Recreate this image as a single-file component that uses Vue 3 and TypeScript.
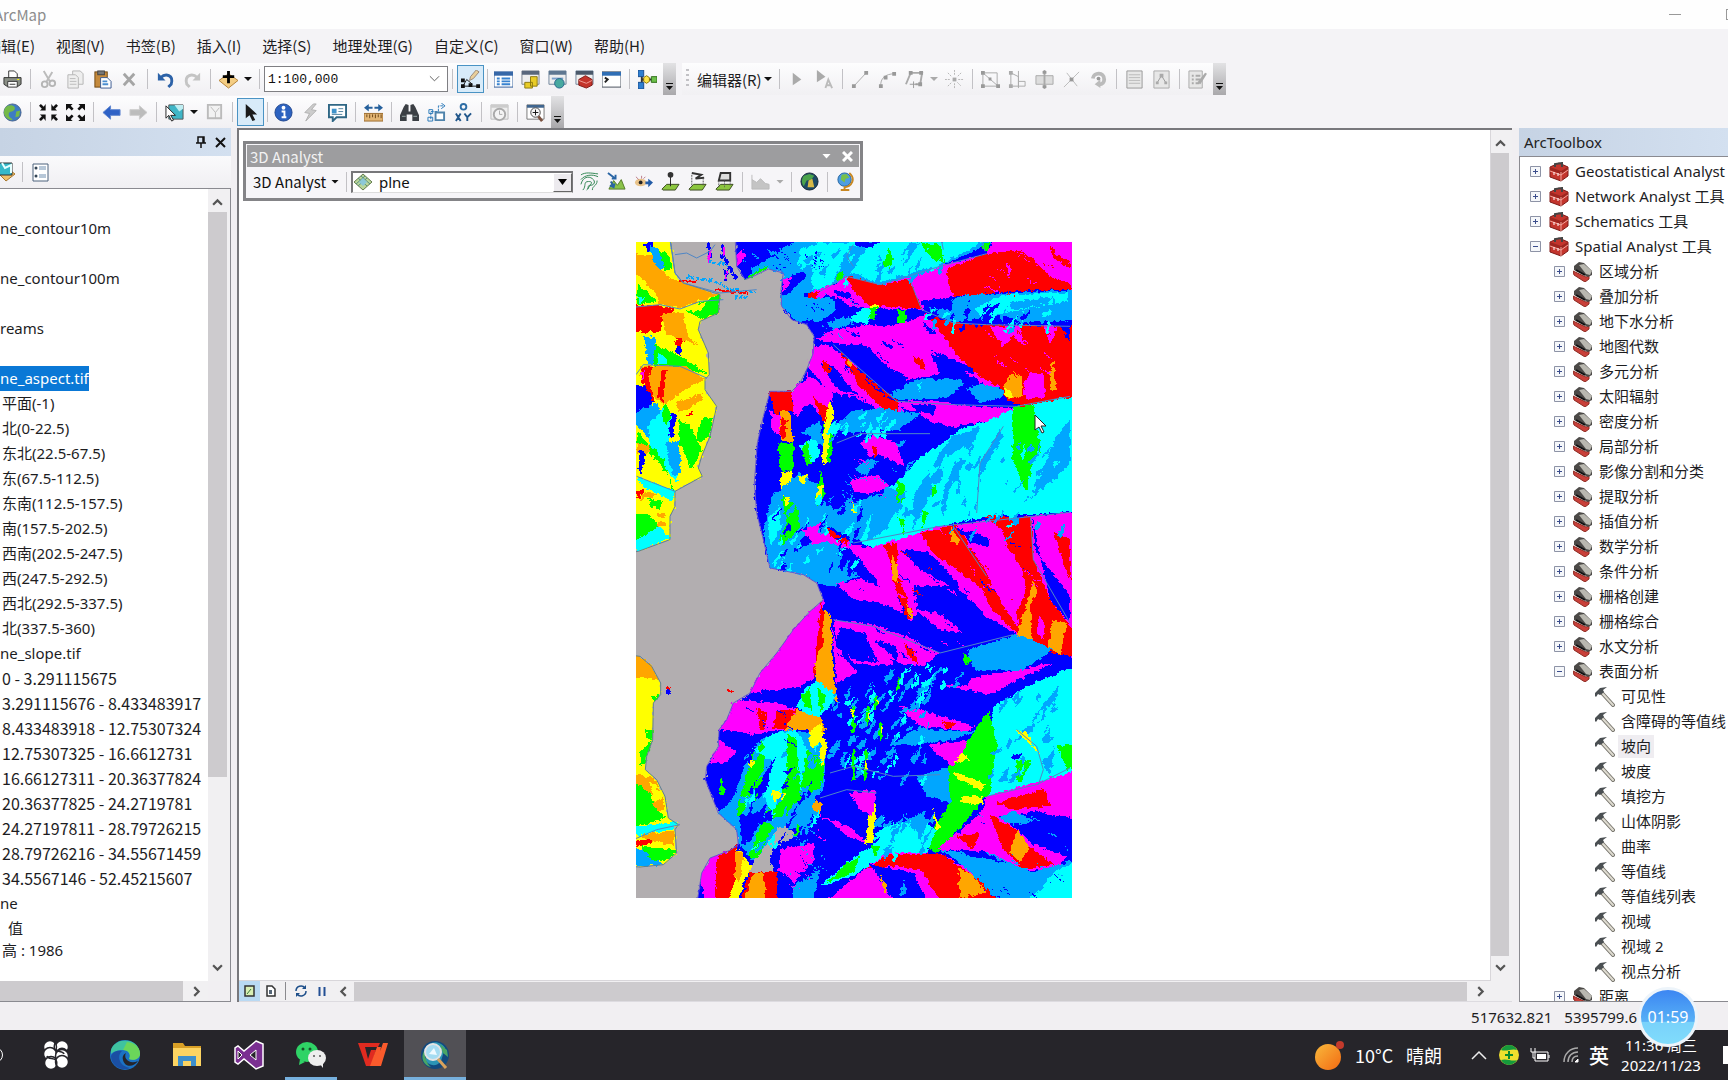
<script setup lang="ts">
type Item = { icon?: string; sep?: boolean; drop?: boolean; on?: boolean; label?: string }

const menus = ['编辑(E)', '视图(V)', '书签(B)', '插入(I)', '选择(S)', '地理处理(G)', '自定义(C)', '窗口(W)', '帮助(H)']

const S: Item = { sep: true }
const D: Item = { drop: true }
const i = (icon: string, label: string, on = false): Item => ({ icon, label, on })

const standardA: Item[] = [i('print', '打印'), S, i('cut', '剪切'), i('copy', '复制'), i('paste', '粘贴'), i('del', '删除'), S, i('undo', '撤消'), i('redo', '恢复'), S, i('add', '添加数据'), D, S]
const standardB: Item[] = [S, i('edit', '编辑器工具条', true), S, i('toc', '内容列表'), i('catalog', '目录'), i('search', '搜索'), i('toolbox', '工具箱'), i('python', 'Python'), S, i('model', '模型构建器')]
const editor: Item[] = [S, i('earrow', '编辑工具'), i('earrowA', '编辑注记'), S, i('eline', '直线'), i('earc', '弧线'), i('etrace', '追踪'), D, i('epoint', '点'), S, i('evert', '编辑折点'), i('eshape', '整形'), i('ecut', '裁剪面'), i('esplit', '分割'), i('erot', '旋转'), S, i('eattr', '属性'), i('esketch', '草图属性'), S, i('ecreate', '创建要素')]
const tools: Item[] = [i('globe', '全图'), S, i('zin', '固定比例放大'), i('zout', '固定比例缩小'), S, i('back', '后退'), i('fwd', '前进'), S, i('select', '选择要素'), D, i('clear', '清除选择'), S, i('pointer', '选择元素', true), S, i('info', '识别'), i('bolt', '超链接'), i('popup', 'HTML 弹出窗口'), S, i('measure', '测量'), S, i('find', '查找'), i('route', '查找路径'), i('xy', '转到 XY'), S, i('time', '时间滑块'), S, i('viewer', '查看器')]
const analyst: Item[] = [i('contour', '等值线'), i('steep', '最陡路径'), i('los', '通视线'), i('ipoint', '插值点'), i('iline', '插值线'), i('ipoly', '插值面'), S, i('profile', '剖面图'), D, S, i('scene', 'ArcScene'), S, i('aglobe', 'ArcGlobe')]

const tin = '<path d="M1 18l5-5h13l-4 6H2z" fill="#8cc63f" stroke="#3a4a20"/>'
const icons: Record<string, string> = {
  print: '<path d="M6 9V1h6l3 3v5z" fill="#fff" stroke="#333"/><path d="M1 8h18v7l-3 2H4l-3-2z" fill="#8a8f86" stroke="#333"/><path d="M5 12h10v6H5z" fill="#fff" stroke="#333"/><path d="M15 10h2" stroke="#ff0"/><path d="M7 15h6" stroke="#333"/>',
  cut: '<path d="M5 1l7 12M14 2L8 12" stroke="#bbb" stroke-width="2" fill="none"/><circle cx="6" cy="15" r="3" fill="none" stroke="#b5b5b5" stroke-width="2"/><circle cx="14" cy="14" r="3" fill="none" stroke="#b5b5b5" stroke-width="2"/>',
  copy: '<path d="M7 1h8l3 3v11H7z" fill="#eee" stroke="#b5b5b5"/><path d="M2 5h8l3 3v11H2z" fill="#eee" stroke="#b5b5b5"/><path d="M4 9h6M4 12h7M4 15h7" stroke="#bbb"/>',
  paste: '<rect x="2" y="2" width="13" height="16" fill="#c58a3d" stroke="#704812"/><rect x="5" y="1" width="7" height="4" fill="#777" stroke="#444"/><path d="M8 8h7l4 4v7H8z" fill="#fff" stroke="#3a5a90"/><path d="M10 12h5M10 15h6" stroke="#4b8ed0" stroke-width="2"/>',
  del: '<path d="M4 4l11 12M15 4L4 16" stroke="#a5a5a5" stroke-width="3"/>',
  undo: '<path d="M2 3v8h8z" fill="#2c62a8"/><path d="M5 8c5-5 14-3 11 7l-3 3" fill="none" stroke="#2c62a8" stroke-width="3"/>',
  redo: '<path d="M18 3v8h-8z" fill="#c4c4c4"/><path d="M15 8C10 3 1 5 4 15l3 3" fill="none" stroke="#c4c4c4" stroke-width="3"/>',
  add: '<path d="M0 11l10-7 10 7-10 8z" fill="#f4cd83" stroke="#b48237"/><path d="M10 1v13M4 7h12" stroke="#000" stroke-width="3"/>',
  edit: '<path d="M2 17l4-7 6 5M2 17h16" stroke="#111" fill="none"/><path d="M0 9h4v4H0zM0 15h4v4H0zM8 14h4v4H8zM16 15h4v4h-4z" fill="#111"/><path d="M9 11l1-4 6-7 3 2-6 7z" fill="#e9cf9a" stroke="#987"/>',
  toc: '<path d="M0 2h20v16H0z" fill="#fff" stroke="#2c5b9b"/><path d="M0 2h20v4H0z" fill="#3768a8"/><path d="M3 9h3M8 9h9M3 12h3M8 12h9M3 15h3M8 15h9" stroke="#3983d0" stroke-width="2"/>',
  catalog: '<path d="M1 1h18v14H1z" fill="#eee" stroke="#7a828c"/><path d="M1 1h18v4H1z" fill="#59677b"/><path d="M10 7h7v10h-7zM4 13h8v6H4z" fill="#e9cc26" stroke="#8a7810"/>',
  search: '<path d="M1 1h18v14H1z" fill="#eee" stroke="#71869c"/><path d="M1 1h18v4H1z" fill="#5e7791"/><path d="M4 9h12" stroke="#7ba0cc" stroke-width="2"/><circle cx="12" cy="14" r="5" fill="#48a9a0" stroke="#27648b"/>',
  toolbox: '<path d="M1 1h18v14H1z" fill="#eee" stroke="#71869c"/><path d="M1 1h18v4H1z" fill="#4a586a"/><path d="M4 10l7-4 7 4v6l-6 3-8-3z" fill="#c4342b" stroke="#7d1b18"/><path d="M4 11l8 3 6-3" stroke="#f0a09a" fill="none"/>',
  python: '<path d="M0 2h20v16H0z" fill="#fff" stroke="#444c58"/><path d="M0 2h20v4H0z" fill="#2f6eb5"/><path d="M3 8l3 2-3 3" fill="none" stroke="#222" stroke-width="2"/>',
  model: '<path d="M4 6v10M4 10h12" stroke="#333" stroke-width="2"/><path d="M0 0h6v7H0zM0 13h6v7H0z" fill="#2f7fd0" stroke="#1a4c8c"/><path d="M6 8l3-2 3 2v4l-3 2-3-2z" fill="#ffe54a" stroke="#8a7200"/><path d="M14 7h6v6h-6z" fill="#6cc04a" stroke="#2e6b18"/>',
  globe: '<circle cx="10" cy="10" r="9" fill="#3d7cc4" stroke="#47628a"/><path d="M5 3c5-2 9 1 7 4s-6 1-6 5 4 3 4 6c-5 0-9-4-9-8s2-6 4-7zM14 9l4-1-1 6-4 1z" fill="#74b949"/>',
  zin: '<g fill="#111"><path d="M7 1v7H1l2-2-3-3 2-2 3 3zM13 1v7h6l-2-2 3-3-2-2-3 3zM7 19v-7H1l2 2-3 3 2 2 3-3zM13 19v-7h6l-2 2 3 3-2 2-3-3z"/></g>',
  zout: '<g fill="#111"><path d="M0 1h7L5 3l3 3-2 2-3-3-3 3zM20 1h-7l2 2-3 3 2 2 3-3 3 3zM0 19h7l-2-2 3-3-2-2-3 3-3-3zM20 19h-7l2-2-3-3 2-2 3 3 3-3z"/></g>',
  back: '<path d="M1 10l8-7v4h10v6H9v4z" fill="#2f62c6" stroke="#5f86d0"/>',
  fwd: '<path d="M19 10l-8-7v4H1v6h10v4z" fill="#bcbcbc" stroke="#ccc"/>',
  select: '<path d="M4 2h15v15H4z" fill="#3fb5c6" stroke="#555"/><path d="M10 2l5 7 4-3V2z" fill="#bfeef2"/><path d="M1 3v13l3-3 3 6 2-1-3-5h5z" fill="#fff" stroke="#222"/>',
  clear: '<path d="M3 2h14v14H3z" fill="#f2f2f2" stroke="#bbb" stroke-width="2"/><path d="M6 4l5 6 4-5M11 10v6" stroke="#bbb" fill="none"/>',
  pointer: '<path d="M5 1v15l4-3 3 6 3-1-3-6h5z" fill="#1a1a1a"/>',
  info: '<circle cx="10" cy="10" r="9" fill="#2c62c0" stroke="#1d458d"/><path d="M8 9h3v6M8 15h5" stroke="#fff" stroke-width="2" fill="none"/><circle cx="10" cy="5" r="2" fill="#fff"/>',
  bolt: '<path d="M13 1L4 10l5 1-4 8 11-11-5-1 5-6z" fill="#ccc" stroke="#b0b0b0"/>',
  popup: '<path d="M1 2h18v13H9l-4 4v-4H1z" fill="#fff" stroke="#2f6785" stroke-width="2"/><path d="M4 6h5v5H4z" fill="#3e93cb"/><path d="M11 6h5M11 9h5M4 12h11" stroke="#4d7f9d"/>',
  measure: '<path d="M0 5l5-4v3h4v2H5v3zM20 5l-5-4v3h-4v2h4v3z" fill="#25609c"/><path d="M0 11h20v8H0z" fill="#e3b674" stroke="#9a6a2c"/><path d="M3 12v3M6 12v4M9 12v3M12 12v4M15 12v3M18 12v4" stroke="#6b4516"/>',
  find: '<path d="M4 4l2-3 3 1v7h2V2l3-1 2 3 4 9v6h-7v-7H7v7H0v-6z" fill="#3b3f44"/><path d="M2 14h4M14 14h4" stroke="#9aa"/>',
  route: '<path d="M4 17V9h8V3h5" fill="none" stroke="#2878b8" stroke-dasharray="3 1"/><path d="M15 0l4 3-4 3M1 15h5v4H1zM2 7h4v4H2z" fill="none" stroke="#2878b8"/><path d="M9 10h9v8H9z" fill="#fff" stroke="#4f83ab" stroke-width="2"/>',
  xy: '<circle cx="10" cy="4" r="3" fill="none" stroke="#2f6ea5" stroke-width="2"/><path d="M2 11l5 8M7 11l-5 8M11 11l3 4 4-4M14 15v4" fill="none" stroke="#23588c" stroke-width="2"/>',
  time: '<path d="M1 2h18v15H1z" fill="#eee" stroke="#bbb"/><path d="M1 2h18v3H1z" fill="#ccc"/><circle cx="10" cy="12" r="6" fill="#f4f4f4" stroke="#aaa" stroke-width="2"/><path d="M10 8v4h3" stroke="#aaa" fill="none"/>',
  viewer: '<path d="M1 2h18v15H1z" fill="#fff" stroke="#777"/><path d="M1 2h18v3H1z" fill="#40668f"/><circle cx="10" cy="10" r="5" fill="#f6f6f6" stroke="#444"/><path d="M10 7v6M7 10h6" stroke="#111"/><path d="M13 14l4 5" stroke="#7a5140" stroke-width="3"/>',
  earrow: '<path d="M5 3v13l9-6z" fill="#aaa"/>',
  earrowA: '<path d="M2 0v13l9-6z" fill="#aaa"/><path d="M11 19l3-9 4 9M12 16h5" fill="none" stroke="#bbb" stroke-width="2"/>',
  eline: '<path d="M3 17L16 3" stroke="#aaa"/><path d="M1 15h4v4H1zM14 1h4v4h-4z" fill="#999"/>',
  earc: '<path d="M3 17C2 9 8 4 17 4" stroke="#aaa" fill="none"/><path d="M1 15h4v4H1zM15 2h4v4h-4zM6 6h4v4H6z" fill="#999"/>',
  etrace: '<path d="M1 15L6 3h12l-2 12h-5" stroke="#aaa" fill="none" stroke-width="2"/><path d="M4 1h4v4H4zM15 1h4v4h-4zM14 13h4v4h-4z" fill="#999"/><path d="M9 12v7M5 15h8" stroke="#999"/>',
  epoint: '<path d="M10 0v6M10 14v6M0 10h6M14 10h6M3 3l4 4M13 13l4 4M17 3l-4 4M3 17l4-4" stroke="#b5b5b5" stroke-dasharray="2 1"/><path d="M8 8h4v4H8z" fill="#aaa"/>',
  evert: '<path d="M2 3v14h16L2 3h15v13" stroke="#aaa" fill="none"/><path d="M0 1h4v4H0zM0 15h4v4H0zM16 15h4v4h-4zM8 8h3v3H8z" fill="#999"/>',
  eshape: '<path d="M3 3v14h8V7L3 3M11 1v18M11 12h7v5h-7" stroke="#aaa" fill="none"/><path d="M1 1h4v4H1zM1 15h4v4H1z" fill="#aaa"/>',
  ecut: '<path d="M1 6h18v9H1z" fill="#ddd" stroke="#aaa"/><path d="M10 0v20" stroke="#aaa" stroke-width="2"/><path d="M8 1h4v3H8zM8 16h4v3H8z" fill="#999"/>',
  esplit: '<path d="M2 18L18 2M5 3l11 14" stroke="#bbb"/><path d="M8 8h4v4H8z" fill="#999"/>',
  erot: '<path d="M4 9c1-7 12-7 12 1 0 3-2 5-5 5" fill="none" stroke="#bbb" stroke-width="4"/><path d="M12 10v9l-6-4z" fill="#bbb"/><circle cx="10" cy="9" r="2" fill="#999"/>',
  eattr: '<path d="M2 1h16v18H2z" fill="#e7e7e7" stroke="#999"/><path d="M4 5h12M4 8h12M4 11h12M4 14h12" stroke="#bbb"/>',
  esketch: '<path d="M2 1h16v18H2z" fill="#e7e7e7" stroke="#aaa"/><path d="M5 14l5-8 5 8" stroke="#999" fill="none"/><path d="M8 4h4v4H8zM4 12h3v3H4zM13 12h3v3h-3z" fill="#aaa"/>',
  ecreate: '<path d="M1 1h14v18H1z" fill="#e7e7e7" stroke="#aaa"/><path d="M4 6h2M8 6h5M4 10h2M8 10h5M4 14h2M8 14h4" stroke="#aaa" stroke-width="2"/><path d="M10 13l8-10 2 1-7 11z" fill="#aaa"/>',
  contour: '<path d="M1 3c5-3 10-2 18-1M1 8c4-5 12-6 18-3M1 13c2-8 8-9 12-6s2 7-2 7-1 3-4 5M3 19c4-4 0-9 6-9s2 3-1 8M13 19c0-5 5-4 5-10" fill="none" stroke="#2d8450"/>',
  steep: '<path d="M2 18l5-9 4 5 4-6 4 10z" fill="#8bc34a" stroke="#557a2a"/><path d="M1 1l8 6M9 3v4H5M4 10l3 5M3 14l4 2 1-4" stroke="#2a65a5" stroke-width="2" fill="none"/>',
  los: '<ellipse cx="7" cy="11" rx="6" ry="4" fill="#e9c38a"/><circle cx="7" cy="11" r="2" fill="#222"/><path d="M12 10h3V7l5 4-5 5v-3h-3z" fill="#225ba6"/><path d="M2 5l3 3M8 4v3M12 5l-2 2" stroke="#b78"/>',
  ipoint: tin + '<path d="M10 5v10" stroke="#222"/><circle cx="10" cy="3" r="3" fill="#333"/>',
  iline: tin + '<path d="M4 1l10 2-6 4 9-1" fill="none" stroke="#333" stroke-width="2"/><path d="M4 3v12M16 6v9" stroke="#555" stroke-dasharray="2 1"/>',
  ipoly: tin + '<path d="M6 1h10v8H4z" fill="#ddd" stroke="#333" stroke-width="2"/><path d="M4 9v7M10 9v7M16 9v6" stroke="#555" stroke-dasharray="2 1"/>',
  profile: '<path d="M1 3v15h18v-5l-4-1-5-5-4 4-5-3" fill="#c4c4c4" stroke="#bbb"/>',
  scene: '<circle cx="10" cy="10" r="9" fill="#1c4964" stroke="#123"/><path d="M4 4l6-2 5 2-3 4-5 1-3 6c-3-4-2-8 0-11z" fill="#4aa34b"/><path d="M9 9l4-2 2 9H8z" fill="#d7b946"/>',
  aglobe: '<circle cx="9" cy="8" r="7" fill="#4e9de2" stroke="#2263a0"/><path d="M6 3l5-1 3 4-4 1-1 4-4-3z" fill="#77c04a"/><path d="M14 1c7 6 3 15-6 15M9 16v3M5 19h9" stroke="#c88722" stroke-width="2" fill="none"/>',
}

const legend = ['平面(-1)', '北(0-22.5)', '东北(22.5-67.5)', '东(67.5-112.5)', '东南(112.5-157.5)', '南(157.5-202.5)', '西南(202.5-247.5)', '西(247.5-292.5)', '西北(292.5-337.5)', '北(337.5-360)']
const slopes = ['0 - 3.291115675', '3.291115676 - 8.433483917', '8.433483918 - 12.75307324', '12.75307325 - 16.6612731', '16.66127311 - 20.36377824', '20.36377825 - 24.2719781', '24.27197811 - 28.79726215', '28.79726216 - 34.55671459', '34.5567146 - 52.45215607']

type Node = { t: string; l: number; open?: boolean; hot?: boolean }
const tree: Node[] = [
  { t: 'Geostatistical Analyst', l: 0 }, { t: 'Network Analyst 工具', l: 0 }, { t: 'Schematics 工具', l: 0 }, { t: 'Spatial Analyst 工具', l: 0, open: true },
  ...['区域分析', '叠加分析', '地下水分析', '地图代数', '多元分析', '太阳辐射', '密度分析', '局部分析', '影像分割和分类', '提取分析', '插值分析', '数学分析', '条件分析', '栅格创建', '栅格综合', '水文分析'].map((t) => ({ t, l: 1 })),
  { t: '表面分析', l: 1, open: true },
  ...['可见性', '含障碍的等值线', '坡向', '坡度', '填挖方', '山体阴影', '曲率', '等值线', '等值线列表', '视域', '视域 2', '视点分析'].map((t) => ({ t, l: 2, hot: t === '坡向' })),
  { t: '距离', l: 1 },
]

/* Aspect classes */
const C: Record<string, string> = { g: '#b2aeb0', y: '#ffff00', o: '#ffa600', r: '#ff0000', m: '#ff00ff', b: '#0000ff', s: '#00a6ff', c: '#00ffff', n: '#00ff00' }

const eastCoast = 'M345 20L350 110 375 150 400 140 445 118 490 130 483 180 485 230 515 270 560 285 582 320 580 370 560 420 540 460 515 485 450 485 430 560 412 640 403 760 410 850 430 930 450 1015 550 1035 590 1060 610 1110 570 1145 520 1200 470 1270 420 1330 390 1390 340 1420 320 1470 297 1500 295 1550 260 1610 256 1650 275 1700 295 1750 350 1800 355 1845 330 1862 270 1885 245 1930 228 2040 1400 2040 1400 0z'
const westCoast = 'M20 20L150 20 165 130 190 160 300 195 295 250 240 275 235 300 265 370 268 435 255 450 255 480 290 530 270 620 245 680 235 715 247 740 165 785 165 830 150 860 150 930 55 965 20 970z'
const southCoast = 'M20 1275L60 1280 95 1310 122 1360 122 1395 100 1420 98 1530 80 1580 76 1620 110 1650 135 1700 145 1765 175 1785 165 1800 170 1870 130 1905 60 1912 20 1910z'

const west: [string, string][] = [
  ['o', '20,65 100,80 150,150 290,170 300,195 230,215 180,235 120,225 110,195 60,140 20,130'],
  ['b', '70,40 100,40 105,60 85,65'], ['s', '90,50 115,55 145,105 125,125 100,95'], ['n', '120,60 145,80 155,115 135,125'],
  ['n', '55,165 80,185 110,215 50,225'], ['c', '50,200 75,205 60,222'],
  ['n', '190,240 300,195 300,245 240,270 215,250'], ['y', '200,225 260,220 240,245 190,240'],
  ['r', '20,230 110,225 165,240 125,275 120,310 55,305 20,300'], ['o', '125,250 190,250 205,320 230,345 190,330 140,315'],
  ['s', '70,320 105,325 110,400 85,405'], ['n', '105,345 180,380 262,430 180,415 100,408'], ['r', '170,325 188,330 183,360 168,350'], ['b', '168,350 184,350 182,375 165,370'],
  ['c', '115,370 140,385 140,405 110,403'],
  ['o', '60,410 200,410 255,450 200,475 130,525 90,490 60,440'], ['r', '60,415 100,410 85,440 105,520 70,480'], ['r', '125,420 140,420 128,520 112,500'],
  ['m', '60,430 75,425 70,450'], ['b', '20,455 75,470 100,515 75,560 20,560'], ['s', '20,560 110,520 130,560 100,640 50,590'],
  ['c', '85,590 130,530 155,560 150,640 175,760 120,700 90,650'], ['b', '155,550 170,555 160,625 145,615'], ['s', '135,640 180,630 182,730 160,740'],
  ['n', '175,570 210,590 245,660 215,720 180,640'], ['o', '165,520 250,490 240,520 180,545'], ['r', '195,560 225,540 220,555'], ['n', '135,520 155,545 140,590 125,560'],
  ['n', '245,570 280,560 270,620 225,640'],
  ['n', '55,610 130,690 165,790 140,790 80,720 50,640'], ['y', '50,650 80,660 150,740 155,800 90,750 60,720'], ['o', '50,640 90,650 85,670 50,670'],
  ['b', '60,660 75,665 68,735 55,720'], ['c', '50,740 165,785 155,815 60,765'], ['r', '50,780 75,780 60,805 50,800'], ['o', '75,785 115,795 60,810'],
  ['n', '85,805 125,815 120,840 90,830'], ['n', '20,850 90,855 130,910 115,935 20,960'], ['c', '20,945 95,905 120,890 150,925 55,965'], ['o', '110,852 135,852 135,862 110,862'], ['o', '112,880 135,880 135,890 112,890'],
]
const south: [string, string][] = [
  ['o', '20,1270 60,1280 95,1310 115,1350 20,1340'], ['n', '95,1400 122,1395 105,1420'], ['n', '75,1500 100,1500 98,1530 80,1525'], ['n', '60,1570 95,1530 80,1600 60,1610'],
  ['o', '20,1630 100,1645 120,1680 85,1700 20,1640'], ['n', '20,1650 80,1680 110,1730 135,1765 20,1800'], ['o', '95,1720 130,1700 135,1740 110,1745'], ['y', '90,1660 110,1665 120,1700 95,1690'],
  ['c', '20,1795 175,1775 165,1800 60,1815 20,1820'], ['o', '60,1815 160,1805 165,1850 80,1830'], ['r', '20,1835 100,1830 80,1850 20,1845'], ['n', '60,1850 165,1860 150,1890 80,1895'], ['s', '20,1850 70,1860 130,1905 20,1912'], ['n', '80,1865 140,1870 120,1895 90,1890'],
]
const east: [string, string][] = [
  ['s', '340,20 1150,20 1050,70 960,110 900,135 780,165 680,140 620,175 560,190 545,200 640,205 650,240 600,275 530,275 480,225 485,160 440,118 380,155 400,110 460,80'],
  ['b', '340,20 560,20 480,60 400,80 350,105'], ['m', '340,80 370,60 375,80 350,115'],
  ['n', '370,150 445,105 440,120 395,175'],
  ['c', '540,60 600,40 1100,30 960,105 870,130 780,158 690,130 620,170 580,180 570,110 530,110'],
  ['s', '690,50 740,50 700,120 675,140 640,160 665,100'], ['b', '705,38 775,38 760,52 720,52'], ['s', '870,40 900,40 850,110 840,80'],
  ['n', '900,40 960,45 978,100 940,95'], ['n', '805,50 818,90 808,125 790,120'], ['n', '1090,38 1110,38 1105,65 1085,60'], ['n', '655,130 670,120 665,155 650,155'],
  ['b', '480,160 540,125 560,140 500,200 485,200'], ['m', '490,150 520,140 500,175 485,190'],
  ['m', '1120,30 1400,20 1400,180 1180,182 1010,200 905,212 910,240 740,235 690,230 640,198 565,205 570,188 650,160 680,140 780,165 900,135 960,110 1100,72'],
  ['r', '985,115 1090,75 1200,60 1240,90 1290,140 1350,160 1350,180 1180,184 1000,200 985,160'], ['r', '680,138 780,165 870,150 905,238 740,225 710,195'], ['r', '560,190 600,185 590,205 560,205'],
  ['r', '1290,40 1310,75 1350,100 1350,115 1300,85'], ['m', '1160,95 1175,120 1165,140'], ['b', '640,180 690,190 685,205 650,198'],
  ['s', '925,225 1050,195 1400,180 1400,270 1200,278 1130,258 1000,278 930,245'], ['b', '910,215 1000,205 990,240 930,235'], ['c', '1065,235 1150,195 1345,188 1345,215 1250,232 1080,265'], ['s', '1160,220 1300,200 1280,225 1180,240'],
  ['b', '1100,265 1150,258 1200,275 1120,285'],
  ['c', '695,260 740,232 760,235 740,285 690,275'], ['n', '752,228 775,222 765,270 745,268'], ['y', '755,225 775,222 770,235 752,236'], ['n', '835,240 860,240 855,285 830,280'], ['s', '615,280 690,260 690,285 640,300'],
  ['m', '585,330 640,300 740,285 800,290 870,275 920,250 960,290 1060,420 1150,475 1090,465 1000,400 930,370 960,430 900,445 850,455 800,410 740,345 680,345'],
  ['b', '780,335 820,350 815,360 790,348'], ['b', '905,275 950,310 930,315'], ['r', '875,380 910,390 915,425 890,405'], ['b', '930,360 1000,390 1070,420 1060,435 980,400'],
  ['r', '915,250 1000,280 1090,285 1400,290 1400,500 1210,530 1160,510 1140,470 1080,440 1010,375 965,310'],
  ['m', '1110,290 1200,285 1215,350 1180,320 1150,350'], ['m', '1270,290 1310,290 1290,345'], ['b', '1310,275 1350,280 1350,340 1335,310'], ['m', '1230,430 1270,430 1275,500 1215,512 1210,460'],
  ['o', '1180,425 1205,445 1208,500 1165,508 1148,475'], ['o', '1300,388 1310,480 1290,485 1288,430'], ['y', '1150,475 1175,485 1180,505 1160,505'],
  ['s', '805,495 860,460 900,450 1000,445 1035,462 980,505 840,512'], ['s', '1040,478 1080,463 1145,475 1155,500 1080,518'], ['c', '890,460 905,460 900,490'],
  ['m', '575,350 620,345 700,400 760,480 830,515 950,515 1050,530 1190,535 1120,570 1000,592 940,580 890,545 780,540 700,500 640,490 560,440'],
  ['b', '600,400 640,410 700,480 720,500 650,480'], ['b', '650,360 760,370 800,410 860,440 850,480 790,490 740,440 700,400'], ['b', '560,410 600,450 620,480 570,460'], ['r', '605,385 635,420 625,440 605,410'],
  ['r', '655,360 720,425 780,475 835,515 835,545 780,535 720,475 690,420'], ['o', '680,390 700,400 690,412'], ['b', '870,525 950,525 940,555 900,550'],
  ['r', '445,480 515,485 520,545 475,545 470,570'], ['m', '515,480 570,440 640,490 632,560 605,560 570,520 530,560 520,540'], ['r', '575,500 632,540 615,582'], ['m', '450,540 480,560 480,620 455,600'],
  ['b', '630,510 700,520 690,560 640,640'], ['s', '650,600 690,545 780,535 900,552 840,600 740,600 700,612'], ['m', '720,640 760,615 830,640 850,710 790,680 750,680'], ['r', '755,650 775,660 768,690'],
  ['m', '640,755 770,735 810,770 750,795 690,780'], ['s', '700,720 740,690 775,695 740,735'], ['c', '540,650 590,620 600,680 570,700'], ['s', '540,610 600,575 610,650 570,620'], ['n', '545,660 560,640 575,700 560,710'],
  ['o', '480,545 508,545 520,640 482,630'], ['r', '485,560 500,575 495,630 480,620'], ['n', '472,640 522,640 522,725 485,725'], ['y', '482,728 516,725 516,805 485,790'],
  ['s', '430,900 455,800 540,730 600,770 640,840 780,790 740,945 680,915 600,880 540,930 520,960 555,1040 450,1015'],
  ['n', '485,800 530,830 540,890 490,950 470,950 500,880'], ['c', '445,860 480,820 480,900 450,950'], ['y', '490,800 510,810 500,830'],
  ['n', '635,560 638,640 610,825 585,825 608,690 610,580'], ['y', '630,510 642,550 632,600 620,700 606,700 612,580'], ['y', '535,740 560,740 555,765 540,760'], ['y', '595,770 608,770 600,820 588,820'],
  ['b', '600,700 700,700 690,800 620,830'],
  ['c', '1400,495 1400,845 1100,860 960,890 880,925 760,952 720,940 750,860 790,790 850,740 890,690 970,640 1020,600 1130,562 1190,532'],
  ['s', '1000,620 1080,590 1060,640 980,680 960,760 930,760 950,680'], ['s', '880,800 930,720 940,780 880,900'], ['s', '1350,570 1350,700 1290,760 1250,790 1200,840 1260,740 1310,620'], ['s', '1140,600 1150,620 1080,740 1070,840 1080,700'], ['s', '760,830 800,770 850,790 800,900 740,940 750,880'], ['s', '1010,680 1035,690 985,790 970,860 970,790'],
  ['n', '1178,532 1240,525 1260,640 1240,700 1215,785 1180,690'], ['n', '1240,600 1262,640 1262,670'], ['n', '830,745 855,775 850,820 830,820'], ['n', '905,840 925,850 905,900'], ['n', '940,760 950,790 935,800'], ['n', '835,860 855,880 850,920'], ['y', '690,790 710,850 698,850'],
  ['s', '490,990 600,920 670,950 660,1000 720,1040 640,1070 600,1065 550,1035'],
  ['m', '545,900 600,880 620,900 700,945 760,952 960,890 1240,858 1400,845 1400,1300 1290,1260 1190,1218 1100,1212 1030,1150 930,1100 870,1180 850,1090 790,1080 730,1000 690,960 620,935 580,945'],
  ['r', '1090,860 1232,862 1240,990 1290,1110 1345,1180 1400,1290 1290,1270 1190,1215 1110,1130 1060,1020 960,895 1010,885 1120,960 1170,1000 1150,900'],
  ['m', '1010,890 1110,905 1180,975 1260,1120 1190,1190 1140,1110 1100,1030'], ['r', '1200,1000 1230,980 1290,1120 1300,1230 1200,1215 1190,1150 1220,1080'], ['r', '900,910 960,900 1040,990 1090,1080 1010,1020 940,970'],
  ['b', '1000,890 1110,925 1110,950 1050,940'], ['b', '840,960 920,965 960,1000 1020,1070 1010,1080 900,1020'], ['b', '1235,860 1245,960 1350,1100 1350,1180 1290,1110'], ['m', '1250,860 1350,850 1350,1080 1290,960'], ['r', '1300,900 1350,930 1350,1060'],
  ['r', '790,945 832,940 830,1020 880,1160 860,1165 820,1060 810,990'], ['r', '600,880 680,930 680,945 640,925'], ['o', '815,975 832,1010 835,1060 815,1050'], ['o', '860,1110 880,1160 868,1165'], ['o', '990,890 1020,930 1010,950 995,930'],
  ['o', '1240,1050 1252,1090 1230,1130 1240,1240 1190,1215 1215,1140'], ['o', '1300,1170 1340,1180 1320,1275 1283,1250'], ['m', '1255,1160 1275,1180 1270,1235 1250,1210'],
  ['b', '880,1070 1010,1070 1100,1160 1190,1215 1050,1240 960,1180 890,1140'], ['m', '890,1140 960,1150 1030,1210 960,1200'],
  ['m', '650,1060 730,1050 830,1090 850,1150 780,1120 700,1110'], ['m', '640,1170 760,1185 860,1220 960,1270 910,1310 830,1300 770,1310 700,1300 650,1230'], ['b', '660,1190 730,1210 780,1300 700,1290 650,1240'], ['b', '760,1230 830,1250 830,1290'], ['r', '850,1240 880,1260 895,1305 870,1285'],
  ['s', '1040,1262 1190,1213 1300,1258 1210,1322 1065,1322'], ['n', '1030,1270 1055,1290 1035,1305'], ['m', '960,1370 1060,1345 1300,1300 1200,1350 1110,1395 1040,1380'], ['b', '990,1335 1060,1335 1040,1370 1000,1370'],
  ['c', '1400,1295 1400,1620 1250,1665 1105,1700 1120,1430 1220,1370'], ['s', '1250,1450 1320,1360 1300,1440 1220,1520 1180,1540'], ['s', '1265,1600 1300,1560 1310,1520 1290,1640'], ['n', '1190,1595 1240,1590 1200,1660 1185,1640'], ['n', '1310,1550 1400,1540 1400,1610 1340,1620'], ['y', '1185,1500 1220,1508 1262,1575 1220,1535'], ['b', '1170,1580 1210,1570 1190,1590'],
  ['s', '890,1640 1000,1610 990,1720 920,1700'], ['n', '1105,1443 1132,1540 1110,1690 1050,1760 950,1870 905,1850 990,1720 985,1610 1060,1510'], ['y', '1015,1560 1052,1590 1000,1600'], ['y', '1000,1625 1095,1665 1085,1682 1010,1645'], ['y', '1030,1700 1090,1700 1090,1725 1020,1718'],
  ['m', '840,1430 900,1440 1065,1490 1040,1505 900,1490'], ['r', '960,1475 1010,1480 990,1500'], ['s', '820,1545 880,1500 1065,1505 1000,1530 880,1545'], ['m', '925,1545 1045,1530 1000,1610 960,1580'],
  ['m', '1100,1700 1400,1615 1400,1780 1250,1745 1180,1755 1130,1760 1000,1840 950,1860 1080,1752'], ['r', '1130,1720 1270,1678 1290,1728 1180,1740'], ['s', '1120,1770 1180,1745 1240,1770 1200,1785'], ['b', '1240,1770 1350,1760 1350,1840 1280,1850 1200,1800'],
  ['m', '960,1860 1100,1740 1180,1790 1240,1845 1340,1880 1300,1925 1220,1920 1100,1870'], ['r', '1110,1755 1190,1800 1230,1850 1300,1905 1210,1920 1150,1860'], ['o', '1190,1800 1230,1850 1200,1900 1170,1870'], ['r', '1010,1820 1080,1810 1060,1860'],
  ['s', '960,1862 1100,1867 1240,1928 1400,1880 1400,2040 1130,2040 1050,1930 1000,1885'], ['c', '1310,1920 1400,1885 1400,2040 1180,2040 1260,1980'], ['b', '1000,1860 1090,1865 1160,1900 1060,1880'],
  ['c', '600,1970 690,1890 770,1840 790,1790 890,1770 950,1800 920,1870 800,1872 700,1940'], ['n', '680,1900 720,1880 700,1930 620,1960'], ['n', '750,1845 780,1850 765,1880'], ['s', '850,1760 930,1770 900,1830'], ['y', '765,1718 762,1840 735,1842 748,1750'], ['y', '935,1730 960,1790 950,1800'],
  ['m', '620,2010 720,1930 800,1870 960,1872 1050,1922 1150,2040 620,2040'], ['r', '740,1918 800,1875 960,1872 1060,1935 1130,2010 960,2010 900,1920 830,1910'], ['o', '1015,1915 1060,1935 1100,1990 1020,2005'], ['b', '750,1905 880,1930 920,2010 820,2010'], ['s', '850,1950 860,1990 840,2000'], ['o', '780,1935 800,1970 795,2000'],
  ['m', '612,1105 570,1145 520,1200 470,1270 420,1330 385,1390 540,1372 580,1342 605,1250'], ['m', '635,1180 650,1250 710,1330 650,1360'], ['r', '605,1110 620,1200 605,1300 580,1345 590,1250'], ['o', '612,1140 632,1160 640,1330 655,1425 590,1352 585,1300 608,1240'],
  ['m', '340,1410 470,1420 530,1440 500,1500 400,1515 295,1500 325,1450'], ['r', '410,1435 440,1450 435,1500 420,1500'], ['r', '470,1440 530,1440 500,1500 460,1495'], ['o', '530,1440 600,1460 615,1500 600,1540 575,1540 565,1500 495,1500'],
  ['c', '530,1430 550,1380 590,1352 650,1400 600,1465 545,1445'], ['n', '545,1400 570,1375 575,1440 550,1430'], ['n', '590,1370 620,1400 600,1450'], ['m', '270,1600 300,1530 350,1570 310,1600'],
  ['s', '290,1750 330,1720 350,1680 380,1590 420,1530 500,1500 570,1510 620,1540 610,1680 510,1770 430,1870 400,1895 355,1840 350,1800'],
  ['n', '390,1600 440,1560 430,1620 380,1720 360,1780 350,1740'], ['c', '400,1560 450,1515 530,1500 560,1560 540,1690 460,1760 430,1700 460,1600'], ['b', '440,1620 465,1580 440,1680 400,1720 380,1780 400,1690'], ['n', '500,1510 530,1530 540,1690 500,1760 450,1770 500,1650'], ['n', '560,1560 615,1600 600,1680 545,1670'], ['y', '565,1540 570,1510 605,1480 620,1560 610,1610 590,1560'], ['y', '380,1590 405,1600 390,1615'], ['y', '455,1680 495,1690 490,1710 460,1710'],
  ['b', '355,1760 440,1740 400,1820 370,1850'], ['n', '430,1770 460,1790 410,1890 385,1880'], ['n', '300,1640 315,1690 300,1700'], ['s', '520,1770 560,1710 600,1750 560,1790 500,1800'], ['o', '570,1700 608,1725 600,1755 580,1740'],
  ['g', '385,1930 410,1885 440,1845 470,1800 500,1790 530,1820 460,1850 450,1900 470,1930'],
  ['m', '690,1690 770,1680 755,1760 720,1740'], ['m', '590,1750 700,1800 740,1840 680,1820 650,1790'], ['m', '480,1860 580,1840 585,1890 520,1960 475,1920'], ['s', '520,1970 600,1920 580,2010 520,2010'],
  ['m', '240,2030 245,1930 270,1885 330,1862 320,1920 290,2030'], ['r', '290,1885 350,1850 350,1960 320,2030 285,2030'], ['y', '350,1850 395,1910 370,1960 350,2030 320,2030 345,1950'], ['o', '350,1850 370,1880 355,1960 345,1940'], ['r', '390,1930 470,1925 470,2020 360,2020'], ['o', '400,1930 430,1930 440,2020 370,2020'], ['b', '228,2030 240,1950 260,2030'],
]

/* Small facets scattered over parts of the slope: x, y, w, h, colours, count */
const zones: [number, number, number, number, string, number][] = [
  [640, 1350, 300, 230, 'sssc', 60], [640, 1050, 400, 260, 'bbm', 60], [380, 1520, 230, 320, 'ncsb', 60], [480, 780, 250, 240, 'scb', 60], [360, 45, 240, 60, 'sb', 40],
  [800, 620, 540, 280, 'ssc', 60], [560, 45, 420, 90, 'sc', 40], [930, 200, 400, 70, 'bsc', 40], [590, 300, 260, 240, 'bm', 36], [1000, 60, 330, 120, 'mr', 24],
  [1080, 290, 260, 130, 'mr', 24], [780, 1740, 170, 120, 'sc', 30], [780, 940, 500, 150, 'mbr', 36], [480, 1780, 110, 200, 'mbs', 30], [1120, 1350, 220, 280, 'sc', 40],
  [1060, 1740, 280, 240, 'sb', 30], [660, 680, 160, 130, 'sm', 24], [640, 540, 200, 60, 'sc', 24], [300, 1400, 200, 130, 'mb', 20], [540, 180, 140, 130, 'sb', 30], [800, 1300, 240, 80, 'sc', 24],
  [640, 1560, 300, 80, 'sc', 14],
]
let seed = 7
const rnd = () => ((seed = (seed * 16807) % 2147483647) / 2147483647)
const facets = zones.flatMap(([x, y, w, h, cs, n]) =>
  Array.from({ length: n }, () => {
    const px = Math.round(x + rnd() * w), py = Math.round(y + rnd() * h)
    const vertical = cs.includes('c')
    const dx = Math.round(vertical ? -10 - rnd() * 26 : 12 + rnd() * 26), dy = Math.round(12 + rnd() * (vertical ? 34 : 12))
    const t = Math.round(4 + rnd() * 7)
    return { d: `M${px} ${py}l${dx} ${dy} ${t} ${t} ${-Math.round(dx / 2)} ${-Math.round(dy / 2)}z`, c: C[cs[Math.floor(rnd() * cs.length)]] }
  }),
)
const streams = [
  'M150 30L165 130 190 160 300 190 410 180', 'M48 232L120 225 180 238 240 215 310 210', 'M48 435L70 405 180 410 260 445', 'M50 740L165 785', 'M700 45L680 80 700 110',
  'M1085 35L1095 65M965 35L970 60', 'M600 185L680 140 780 165 960 110 1100 72', 'M870 150L905 240 1000 280 1100 285 1350 290', 'M640 345L700 400 830 515 1000 525 1190 530 1350 500', 'M650 640L720 612 930 612', 'M1150 590L1080 700 1070 850', 'M700 940L960 890 1350 848',
  'M1232 862L1240 990 1350 1180', 'M1000 890L1100 1040', 'M640 1170L760 1190 960 1270 1180 1215', 'M630 1630L700 1610 820 1640 960 1635', 'M600 1705L680 1680 770 1690', 'M1350 1615L1250 1665 1100 1700', 'M1190 1500L1250 1550 1270 1620 1255 1665', 'M40 1830L110 1800 180 1785', 'M165 75L200 70 230 85 270 65 285 45',
]
</script>

<template>
  <div class="app">
    <header class="title"><span class="name">ArcMap</span><span class="min"></span><span class="max"></span></header>
    <nav class="menu"><button v-for="m in menus" :key="m">{{ m }}</button></nav>

    <div class="bars">
      <div class="row">
        <div class="bar">
          <template v-for="(t, k) in standardA" :key="'a' + k">
            <i v-if="t.sep" class="sep"></i><i v-else-if="t.drop" class="drop"></i>
            <button v-else class="tool" :class="{ on: t.on }" :aria-label="t.label"><svg viewBox="0 0 20 20" v-html="icons[t.icon!]"></svg></button>
          </template>
          <label class="scale"><select aria-label="比例尺"><option>1:100,000</option></select><svg viewBox="0 0 12 8"><path d="M1 1l5 5 5-5" fill="none" stroke="#555" /></svg></label>
          <template v-for="(t, k) in standardB" :key="'b' + k">
            <i v-if="t.sep" class="sep"></i>
            <button v-else class="tool" :class="{ on: t.on }" :aria-label="t.label"><svg viewBox="0 0 20 20" v-html="icons[t.icon!]"></svg></button>
          </template>
          <button class="grip" aria-label="工具条选项"></button>
        </div>
        <div class="bar second">
          <i class="dots"></i>
          <button class="word">编辑器(R)</button><i class="drop"></i>
          <template v-for="(t, k) in editor" :key="'e' + k">
            <i v-if="t.sep" class="sep"></i><i v-else-if="t.drop" class="drop dim"></i>
            <button v-else class="tool" :aria-label="t.label"><svg viewBox="0 0 20 20" v-html="icons[t.icon!]"></svg></button>
          </template>
          <button class="grip" aria-label="工具条选项"></button>
        </div>
      </div>
      <div class="row">
        <div class="bar">
          <template v-for="(t, k) in tools" :key="'t' + k">
            <i v-if="t.sep" class="sep"></i><i v-else-if="t.drop" class="drop"></i>
            <button v-else class="tool" :class="{ on: t.on }" :aria-label="t.label"><svg viewBox="0 0 20 20" v-html="icons[t.icon!]"></svg></button>
          </template>
          <button class="grip" aria-label="工具条选项"></button>
        </div>
      </div>
    </div>

    <main class="body">
      <aside class="toc">
        <div class="cap right">
          <svg width="10" height="13" viewBox="0 0 10 13"><path d="M2 1h6v6H2zM0 7h10M5 7v5M7 1v6" fill="none" stroke="#111" stroke-width="1.5" /></svg>
          <svg width="11" height="11" viewBox="0 0 11 11"><path d="M1 1l9 9M10 1l-9 9" stroke="#111" stroke-width="2" /></svg>
        </div>
        <div class="tocbar">
          <svg width="16" height="20" viewBox="0 0 16 20"><path d="M0 13l6 6 9-7-4-3z" fill="#efc06a" stroke="#a8772c" /><path d="M-4 1h16v12H-4z" fill="#35b8c9" stroke="#333" /><path d="M2 1l3 5 6-3v8" fill="none" stroke="#e6ffff" stroke-width="2" /></svg>
          <i class="sep"></i>
          <svg width="17" height="19" viewBox="0 0 17 19"><path d="M1 1h15v17H1z" fill="#fff" stroke="#4c637c" /><circle cx="4" cy="5" r="1.5" fill="#345" /><circle cx="4" cy="13" r="1.5" fill="#345" /><path d="M7 4h7M7 6h7M7 12h7M7 14h7" stroke="#6e8fb0" /></svg>
        </div>
        <div class="tocbox">
          <ul class="list">
            <li class="pad">ne_contour10m</li>
            <li class="pad">ne_contour100m</li>
            <li class="pad">reams</li>
            <li class="pad"><span class="sel">ne_aspect.tif</span></li>
            <li v-for="l in legend" :key="l" class="cls">{{ l }}</li>
            <li>ne_slope.tif</li>
            <li v-for="l in slopes" :key="l" class="cls num">{{ l }}</li>
            <li>ne</li>
            <li class="val">值</li>
            <li class="cls high">高 : 1986</li>
          </ul>
          <div class="vbar"><svg viewBox="0 0 10 7"><path d="M1 6l4-4 4 4" /></svg><i class="thumb short"></i><svg viewBox="0 0 10 7"><path d="M1 1l4 4 4-4" /></svg></div>
          <div class="hbar"><i class="thumb"></i><svg viewBox="0 0 7 10"><path d="M1 1l4 4-4 4" /></svg></div>
          <i></i>
        </div>
      </aside>

      <section class="view">
        <div class="canvas">
          <svg class="map" viewBox="48 37 1308 1968" preserveAspectRatio="none" role="img" aria-label="坡向图">
            <defs>
              <filter id="rough" x="0" y="0" width="1" height="1" filterUnits="objectBoundingBox">
                <feTurbulence type="fractalNoise" baseFrequency="0.07" numOctaves="3" seed="4" />
                <feDisplacementMap in="SourceGraphic" scale="17" xChannelSelector="R" yChannelSelector="G" />
              </filter>
              <clipPath id="ec"><path :d="eastCoast" /></clipPath>
              <clipPath id="wc"><path :d="westCoast" /></clipPath>
              <clipPath id="sc"><path :d="southCoast" /></clipPath>
            </defs>
            <rect x="0" y="0" width="1400" height="2040" :fill="C.g" />
            <g filter="url(#rough)" shape-rendering="crispEdges">
              <rect x="0" y="0" width="1400" height="2040" :fill="C.g" />
              <g clip-path="url(#wc)"><path :d="westCoast" :fill="C.y" /><polygon v-for="(p, k) in west" :key="k" :points="p[1]" :fill="C[p[0]]" /></g>
              <g clip-path="url(#sc)"><path :d="southCoast" :fill="C.y" /><polygon v-for="(p, k) in south" :key="k" :points="p[1]" :fill="C[p[0]]" /></g>
              <g clip-path="url(#ec)">
                <path :d="eastCoast" :fill="C.b" />
                <polygon v-for="(p, k) in east" :key="k" :points="p[1]" :fill="C[p[0]]" />
                <path v-for="(f, k) in facets" :key="'f' + k" :d="f.d" :fill="f.c" />
                <path d="M700 1430v80M745 1430l-4 60M785 1480l-5 50M740 1560l-5 90M700 1560v90M770 1400l-6 40M838 1345l-4 40" :stroke="C.n" stroke-width="8" fill="none" />
                <path d="M697 1440v20M747 1450v20M786 1490v20M738 1590v30M773 1410v12" :stroke="C.y" stroke-width="7" fill="none" />
              </g>
              <path d="M265 40l8 55M310 45l-5 40M315 85l35 65M318 120v30" :stroke="C.b" stroke-width="10" fill="none" stroke-dasharray="20 5" />
              <path d="M272 60l-8 40M310 50v30M318 125v20" :stroke="C.m" stroke-width="7" fill="none" />
              <path d="M200 140l80 15 60 28 65 5M265 95l60 10M345 205l40 -5" :stroke="C.s" stroke-width="9" fill="none" stroke-dasharray="9 5" />
              <path d="M180 155l50-2M285 180l100 12" :stroke="C.r" stroke-width="6" fill="none" />
              <path d="M325 390l14 12M140 382l12 10" :stroke="C.r" stroke-width="9" transform="translate(0 990)" />
              <path d="M142 1380l6 14" :stroke="C.b" stroke-width="10" />
            </g>
            <path :d="eastCoast" fill="none" stroke="#6a5acd" stroke-width="3" />
            <path :d="westCoast" fill="none" stroke="#608090" stroke-width="3" />
            <path :d="southCoast" fill="none" stroke="#608090" stroke-width="3" />
            <path v-for="s in streams" :key="s" :d="s" fill="none" stroke="#4f86c6" stroke-width="3" />
          </svg>
          <div class="float">
            <div class="fcap"><span>3D Analyst</span><i class="wdrop"></i><svg width="11" height="11" viewBox="0 0 11 11"><path d="M1 1l9 9M10 1l-9 9" stroke="#fff" stroke-width="3" /></svg></div>
            <div class="fbar">
              <button class="word fa">3D Analyst</button><i class="drop"></i><i class="sep"></i>
              <label class="layer">
                <svg width="20" height="18" viewBox="0 0 20 18"><path d="M10 1l9 8-9 8-9-8z" fill="#b9d69a" stroke="#667c4e" /><path d="M5 5l9 8M14 5l-9 8M8 3l9 8M12 3l-9 8" stroke="#5a9080" /><path d="M10 5l4 4-4 4-4-4z" fill="#8cc8d8" /></svg>
                <select aria-label="图层"><option>plne</option></select><b><i class="tri"></i></b>
              </label>
              <template v-for="(t, k) in analyst" :key="'n' + k">
                <i v-if="t.sep" class="sep"></i><i v-else-if="t.drop" class="drop dim"></i>
                <button v-else class="tool" :aria-label="t.label"><svg viewBox="0 0 20 20" v-html="icons[t.icon!]"></svg></button>
              </template>
            </div>
          </div>
          <svg class="cursor" width="13" height="20" viewBox="0 0 13 20"><path d="M1 1v15l4-3 3 6 2-1-3-6h5z" fill="#fff" stroke="#222" /></svg>
        </div>
        <div class="vbar"><svg viewBox="0 0 10 7"><path d="M1 6l4-4 4 4" /></svg><i class="thumb"></i><svg viewBox="0 0 10 7"><path d="M1 1l4 4 4-4" /></svg></div>
        <div class="foot">
          <button class="fb on" aria-label="数据视图"><svg width="11" height="12" viewBox="0 0 11 12"><path d="M1 1h9v10H1z" fill="#d9efb4" stroke="#333" stroke-width="1.5" /><path d="M3 9l4-5" stroke="#3b7a3b" /></svg></button>
          <button class="fb" aria-label="布局视图"><svg width="10" height="12" viewBox="0 0 10 12"><path d="M1 1h5l3 3v7H1z" fill="#fff" stroke="#333" stroke-width="1.5" /><path d="M3 5h3v4H3z" fill="#567" /></svg></button>
          <i class="fsep"></i>
          <button class="fb" aria-label="刷新"><svg width="12" height="12" viewBox="0 0 12 12"><path d="M1 6a5 5 0 0 1 9-3M11 6a5 5 0 0 1-9 3" fill="none" stroke="#1e4f8a" stroke-width="1.5" /><path d="M11 0v4H7zM1 12V8h4z" fill="#1e4f8a" /></svg></button>
          <button class="fb" aria-label="暂停"><svg width="8" height="9" viewBox="0 0 8 9"><path d="M1.500 0v9M6.500 0v9" stroke="#234f94" stroke-width="2" /></svg></button>
          <div class="hbar"><svg viewBox="0 0 7 10"><path d="M6 1L2 5l4 4" /></svg><i class="thumb"></i><svg viewBox="0 0 7 10"><path d="M1 1l4 4-4 4" /></svg></div>
        </div>
      </section>

      <aside class="box">
        <div class="cap">ArcToolbox</div>
        <ul class="tree">
          <li v-for="n in tree" :key="n.t" :class="'l' + n.l">
            <svg v-if="n.l < 2" class="pm" viewBox="0 0 11 11"><path d="M.5.5h10v10H.5z" fill="#f5f7fa" stroke="#8d93a6" /><path :d="n.open ? 'M3 5.500h5' : 'M3 5.500h5M5.500 3v5'" stroke="#3b4d8c" /></svg>
            <svg v-if="n.l === 0" class="ic" viewBox="0 0 20 20"><path d="M1 5l9-4 9 4v9l-7 5L1 15z" fill="#c3352d" stroke="#7e1b18" /><path d="M1 5l11 4 7-4v2l-7 5L1 8z" fill="#9c2620" /><path d="M1 9l11 4 7-5M12 10v9" stroke="#f1a49c" fill="none" /><path d="M6 5V2l7-1v4" fill="none" stroke="#444" stroke-width="2" /><path d="M5 10v3M9 11v3" stroke="#fff" /></svg>
            <svg v-else-if="n.l === 1" class="ic" viewBox="0 0 20 20"><path d="M0 9l13 6 3-1v3l-4 3L1 13z" fill="#c9403a" stroke="#8d2b22" /><path d="M1 4l5-4 5 1 8 8v4l-4 2L1 8z" fill="#4c4a48" /><path d="M6 3l5-1 8 7-2 4-4-1z" fill="#b9b8b0" /><path d="M3 8l9 5" stroke="#111" stroke-width="2" /></svg>
            <svg v-else class="ic" viewBox="0 0 20 20"><path d="M7 6l11 12" stroke="#77756d" stroke-width="4" stroke-linecap="round" /><path d="M8 7l10 11" stroke="#dedbd0" stroke-width="2" stroke-linecap="round" /><path d="M0 6l5-5 7-1-4 3 1 2-4 3-2-1-2 3-2-2z" fill="#4a4f52" /></svg>
            <span :class="{ hot: n.hot }">{{ n.t }}</span>
          </li>
        </ul>
      </aside>
    </main>

    <footer class="status"><span>517632.821</span><span>5395799.6</span></footer>

    <div class="taskbar">
      <i class="search"></i>
      <button class="app-i first" aria-label="应用"><svg width="26" height="30" viewBox="0 0 26 30" fill="#fff" stroke="#26252a" stroke-width="1.500"><circle cx="19" cy="7" r="6.500" /><circle cx="7" cy="7" r="6.500" /><circle cx="7" cy="14" r="6.500" /><circle cx="19" cy="14" r="6.500" stroke="none" fill="#26252a" /><circle cx="8" cy="23" r="6.500" /><circle cx="19" cy="16" r="6.500" /><circle cx="19" cy="22" r="6.500" /><path d="M12 3c-4 12 8 6 9 11M13 27c4-12-8-6-9-11" fill="none" /></svg></button>
      <button class="app-i" aria-label="Edge"><svg width="32" height="32" viewBox="0 0 32 32"><circle cx="16" cy="16" r="15" fill="#1b72c4" /><path d="M2 11C6-2 29-2 31 14c0 6-7 8-11 6 2-4 0-9-6-9-5 0-10 2-12 4z" fill="#3fc3a0" /><path d="M18 3c8 1 13 5 13 12 0 5-6 7-11 5 3-5-1-9-6-9z" fill="#6bd65a" /><path d="M13 12c-5 4-4 15 8 17-8 4-19-2-19-12 2-5 7-6 11-5z" fill="#1a4fa3" /><path d="M17 14c-3 5 3 12 12 8-4 6-13 7-15-1-1-4 1-6 3-7z" fill="#26252a" /></svg></button>
      <button class="app-i" aria-label="文件资源管理器"><svg width="28" height="26" viewBox="0 0 28 26"><path d="M0 1h10l2 3h16v6H0z" fill="#d9a026" /><path d="M0 6h28v18H0z" fill="#fcd462" /><path d="M5 24V14h18v10h-5v-5h-8v5z" fill="#3d8fcb" /></svg></button>
      <button class="app-i" aria-label="Visual Studio"><svg width="30" height="30" viewBox="0 0 30 30"><path d="M22 1l7 3v22l-7 3-12-10-6 5-3-2V8l3-2 6 5z" fill="#7a2f91" stroke="#fff" stroke-width="1.500" /><path d="M4 11l4 4-4 4zM22 10v10l-6-5z" fill="#26252a" stroke="#fff" /></svg></button>
      <button class="app-i run" aria-label="微信"><svg width="32" height="28" viewBox="0 0 32 28"><ellipse cx="12" cy="11" rx="11" ry="10" fill="#2fd366" /><path d="M5 18l-1 6 6-3z" fill="#2fd366" /><circle cx="8" cy="8" r="1.500" fill="#17502a" /><circle cx="15" cy="8" r="1.500" fill="#17502a" /><ellipse cx="22" cy="17" rx="9" ry="8" fill="#eee" /><path d="M25 23l3 4v-6z" fill="#eee" /><circle cx="19" cy="15" r="1" fill="#555" /><circle cx="25" cy="15" r="1" fill="#555" /></svg></button>
      <button class="app-i" aria-label="WPS"><svg width="30" height="26" viewBox="0 0 30 26"><path d="M0 1h22l-2 4H7l3 12 3-9h5l-5 16H8z" fill="#e02b20" /><path d="M12 24l7-19h4l-2 10-3 9zM25 1h5l-7 23h-6z" fill="#fa5b2c" /></svg></button>
      <button class="app-i act" aria-label="ArcMap"><svg width="30" height="32" viewBox="0 0 30 32"><circle cx="15" cy="16" r="14" fill="#124a7e" /><path d="M6 8c6-8 16-5 19 1l-4 13c-4 6-12 5-15 0z" fill="#2c95b5" /><path d="M4 12c2 8 2 12 7 16-7-1-11-9-7-16zM20 5l7 6 1 7-5-4z" fill="#4aa565" /><circle cx="13" cy="13" r="8" fill="#a4dcf2" stroke="#e4e4e4" stroke-width="2" /><path d="M9 15l5-6 3 7z" fill="#effaff" /><path d="M18 20l8 9" stroke="#d9a25c" stroke-width="3" /></svg></button>
      <div class="space"></div>
      <svg class="sun" width="30" height="30" viewBox="0 0 30 30"><defs><linearGradient id="sg" x2="1" y2="1"><stop stop-color="#f9b93c" /><stop offset="1" stop-color="#f26a12" /></linearGradient></defs><circle cx="13" cy="17" r="13" fill="url(#sg)" /><circle cx="25" cy="5" r="4" fill="#c33a2c" /></svg>
      <span class="temp">10°C</span><span class="wx">晴朗</span>
      <svg class="t1" width="16" height="10" viewBox="0 0 16 10"><path d="M1 9l7-7 7 7" fill="none" stroke="#eee" stroke-width="1.500" /></svg>
      <svg class="t2" width="20" height="20" viewBox="0 0 20 20"><circle cx="10" cy="10" r="10" fill="#f0e02e" /><path d="M2 5c4-7 13-6 16 0-5-2-10 2-16 0zM2 15c4 7 13 6 16 0-5 2-10-2-16 0z" fill="#159a3c" /><path d="M10 6v8M6 10h8" stroke="#0d8a2f" stroke-width="2" /></svg>
      <svg class="t3" width="20" height="16" viewBox="0 0 20 16"><path d="M7 7h9v5H7z" fill="#fff" /><path d="M5 5h13v9H5zM19 8v3M1 1v4h4V1M3 5v6h2" fill="none" stroke="#fff" /></svg>
      <svg class="t4" width="16" height="16" viewBox="0 0 16 16"><path d="M1 15C1 7 7 1 15 1M5 15C5 9 9 5 15 5M9 15c0-4 2-6 6-6" fill="none" stroke="#aaa" stroke-width="1.500" /><path d="M15 15h-3l3-3z" fill="#fff" stroke="#fff" /></svg>
      <span class="ime">英</span>
      <div class="clock"><span>11:36 周三</span><span>2022/11/23</span></div>
      <i class="note"></i>
      <div class="timer">01:59</div>
    </div>
  </div>
</template>

<style>
body { margin: 0; overflow: hidden; background: #f1eff2; }
</style>

<style scoped>
* { box-sizing: border-box; }
.app { display: flex; flex-direction: column; height: 100vh; overflow: hidden; background: #f1eff2; color: #1d1d1f; font: 15px "Noto Sans", "Noto Sans CJK SC", sans-serif; }
button { border: 0; background: none; padding: 0; font: inherit; color: inherit; }
svg { display: block; flex: none; }
ul { list-style: none; margin: 0; padding: 0; }
i { display: block; flex: none; }
.title { height: 29px; flex: none; display: flex; align-items: center; background: #fefefe; color: #8d8d8d; font-family: "Noto Sans CJK SC", sans-serif; overflow: hidden; }
.title .name { margin-left: -6px; }
.title .min { margin-left: auto; width: 12px; height: 1px; background: #999; }
.title .max { margin: 0 -10px 0 45px; width: 12px; height: 11px; border: 1px solid #999; }
.menu { height: 34px; flex: none; display: flex; align-items: center; gap: 21px; margin-left: -14px; padding-bottom: 2px; font-family: "Noto Sans CJK SC", sans-serif; background: #f4f3f6; }
.menu button { white-space: nowrap; }
.bars { flex: none; height: 65px; background: #f4f3f6; }
.row { display: flex; height: 33px; }
.bar { display: flex; align-items: center; height: 32px; margin-left: -1px; background: linear-gradient(#fdfdfe, #f1f0f3); }
.second { margin-left: 6px; }
.tool { width: 27px; height: 28px; display: flex; align-items: center; justify-content: center; flex: none; }
.tool svg { width: 19px; height: 19px; }
.tool.on { background: #d8ebf9; border: 1px solid #4a93c4; }
.sep { width: 1px; height: 20px; margin: 0 4px; background: #c2c1c5; }
.tool.on + .sep { margin: 0 2px 0 3px; }
.drop { width: 13px; height: 4px; background: #111; clip-path: polygon(2px 0, 10px 0, 6px 100%); }
.drop.dim { background: #aaa; }
.grip { width: 13px; height: 32px; margin-left: 2px; background: linear-gradient(#e2e2e4, #a9a8ab); position: relative; }
.grip::after { content: ""; position: absolute; left: 3px; bottom: 5px; width: 7px; height: 7px; background: #111; clip-path: polygon(0 0, 100% 0, 100% 1px, 0 1px, 0 3px, 100% 3px, 50% 100%, 0 3px); }
.scale { display: flex; align-items: center; width: 184px; height: 26px; border: 1px solid #7f7f83; background: #fff; padding: 0 7px 0 3px; }
.scale svg { width: 11px; height: 8px; }
select { appearance: none; border: 0; background: none; flex: 1; padding: 0; color: #111; font: 15px "Noto Sans", sans-serif; outline: 0; min-width: 0; }
.scale select { font: 13px "Liberation Mono", monospace; }
.dots { width: 3px; height: 20px; margin: 0 8px 0 4px; background: repeating-linear-gradient(#c2c1c5 0 2px, transparent 2px 5px); }
.word { white-space: nowrap; font-family: "Noto Sans CJK SC", sans-serif; width: 65px; text-align: left; }

.body { flex: 1; min-height: 0; display: flex; }
.cap { height: 28px; flex: none; display: flex; align-items: center; background: linear-gradient(90deg, #c6d3e4, #d3e0f0); padding: 0 5px; color: #222; }
.cap.right { justify-content: flex-end; gap: 9px; }
.toc { width: 231px; flex: none; margin-right: 6px; display: flex; flex-direction: column; min-height: 0; }
.tocbar { height: 32px; flex: none; display: flex; align-items: center; background: linear-gradient(#fafafc, #f0eff2); }
.tocbar .sep { margin: 0 9px 0 6px; }
.tocbox { flex: 1; min-height: 0; display: grid; grid-template: minmax(0, 1fr) 20px / 1fr 22px; border: 1px solid #8a8a90; border-left: 0; }
.tocbox > ul { background: #fff; overflow: hidden; padding-top: 2px; white-space: nowrap; }
.list li { height: 25px; line-height: 25px; }
.list li.pad { height: 50px; padding-top: 25px; }
.list .sel { display: inline-block; background: #0a78d6; color: #fff; }
.list .cls { padding-left: 2px; }
.list .num { font-family: "Noto Sans CJK SC", sans-serif; font-size: 16px; }
.list .val { padding-left: 8px; }
.list .high { line-height: 18px; }
.vbar { display: flex; flex-direction: column; align-items: center; background: #f1f0f2; padding: 9px 3px 9px 0; }
.vbar svg { width: 11px; height: 8px; }
.hbar svg { width: 8px; height: 11px; }
.vbar path, .hbar path { fill: none; stroke: #555; stroke-width: 2; }
.thumb { flex: 1; background: #cdcbce; align-self: stretch; }
.vbar .thumb { margin: 6px 0 8px; }
.vbar .thumb.short { flex: 0 1 73%; margin-bottom: auto; }
.hbar { display: flex; align-items: center; background: #f1f0f2; gap: 10px; min-width: 0; }
.toc .hbar .thumb { flex: none; width: 183px; }

.view { flex: 1; min-width: 0; display: grid; grid-template: minmax(0, 1fr) 21px / minmax(0, 1fr) 21px; border-top: 2px solid #78787c; border-left: 2px solid #78787c; }
.canvas { position: relative; background: #fff; overflow: hidden; display: flex; justify-content: center; padding-top: 112px; border-right: 1px solid #d8d6da; border-bottom: 1px solid #d8d6da; }
.map { width: 436px; height: 656px; margin-left: -22px; }
.float { position: absolute; left: 4px; top: 11px; width: 620px; height: 60px; border: 3px solid #848487; background: #f6f5f8; padding: 1px; }
.fcap { height: 22px; display: flex; align-items: center; background: #9d9d9f; color: #f2f2f2; padding: 0 6px 0 3px; font-family: "Noto Sans CJK SC", sans-serif; }
.fcap span { flex: 1; }
.wdrop { width: 9px; height: 5px; background: #fff; clip-path: polygon(0 0, 100% 0, 50% 100%); margin-right: 11px; }
.fbar { display: flex; align-items: center; height: 29px; padding-left: 6px; }
.fa { width: 77px; color: #111; }
.layer { width: 222px; height: 22px; display: flex; align-items: center; background: #fff; border: 2px solid #77777a; border-right-width: 1px; border-bottom: 1px solid #ddd; flex: none; gap: 6px; margin-right: 3px; }
.layer b { width: 19px; height: 19px; background: #eceaee; border: 1px solid #fff; border-right-color: #666; border-bottom-color: #666; display: grid; place-items: center; }
.tri { width: 9px; height: 6px; background: #000; clip-path: polygon(0 0, 100% 0, 50% 100%); }
.cursor { position: absolute; left: 795px; top: 284px; }
.foot { grid-column: 1 / 3; display: flex; align-items: center; background: #f1f0f2; border-bottom: 1px solid #dddbe0; }
.fb { width: 21px; height: 20px; display: grid; place-items: center; flex: none; }
.fb.on { background: #b9d9f3; }
.fsep { width: 1px; height: 18px; background: #8a8a8e; margin: 0 4px; }
.foot .hbar { flex: 1; margin-left: 7px; padding-right: 27px; gap: 7px; height: 19px; }
.foot .hbar svg:last-child { margin-left: 3px; }

.box { width: 209px; flex: none; margin-left: 7px; display: flex; flex-direction: column; min-height: 0; }
.tree { flex: 1; min-height: 0; overflow: hidden; background: #fff; border: 1px solid #8a8a90; border-right: 0; padding: 2px 0 0 10px; }
.tree li { display: flex; align-items: center; height: 25px; white-space: nowrap; }
.tree li.l1 { padding-left: 24px; }
.tree li.l2 { padding-left: 65px; }
.pm { width: 11px; height: 11px; margin-right: 8px; }
.ic { width: 20px; height: 20px; margin-right: 3px; }
.tree span { padding: 0 3px; line-height: 23px; }
.tree .hot { background: #efedf1; }

.status { height: 28px; flex: none; display: flex; align-items: center; justify-content: flex-end; gap: 12px; padding: 2px 91px 0 0; }
.taskbar { position: relative; height: 50px; flex: none; display: flex; align-items: center; background: #26252a; color: #fff; }
.search { width: 16px; height: 16px; border: 1px solid #fff; border-radius: 50%; margin: 0 22px 0 -13px; }
.app-i { width: 62px; height: 50px; display: grid; place-items: center; flex: none; }
.app-i.first { margin-right: 7px; }
.run { box-shadow: inset 0 -3px #76b0dd; width: 52px; margin: 0 5px; }
.act { background: #515055; box-shadow: inset 0 -3px #76b0dd; }
.space { flex: 1; }
.sun { margin-right: 10px; }
.temp { font-size: 18px; width: 51px; white-space: nowrap; font-family: "Noto Sans CJK SC", sans-serif; }
.wx { font-size: 18px; width: 65px; }
.t1 { margin-right: 12px; }
.t2 { margin-right: 11px; }
.t3 { margin-right: 13px; }
.t4 { margin-right: 10px; }
.ime { font-size: 20px; font-weight: 500; width: 30px; }
.clock { width: 84px; display: flex; flex-direction: column; align-items: center; line-height: 20px; white-space: nowrap; }
.note { width: 5px; height: 18px; background: #fff; margin-left: 20px; }
.timer { position: absolute; right: 30px; top: -43px; width: 60px; height: 60px; border: 3px solid #edf4fa; border-radius: 50%; background: linear-gradient(#3c86f2 0, #57b0f6 58%, #79d2fb 60%, #80dcfb); display: grid; place-items: center; font-size: 16px; }
</style>
